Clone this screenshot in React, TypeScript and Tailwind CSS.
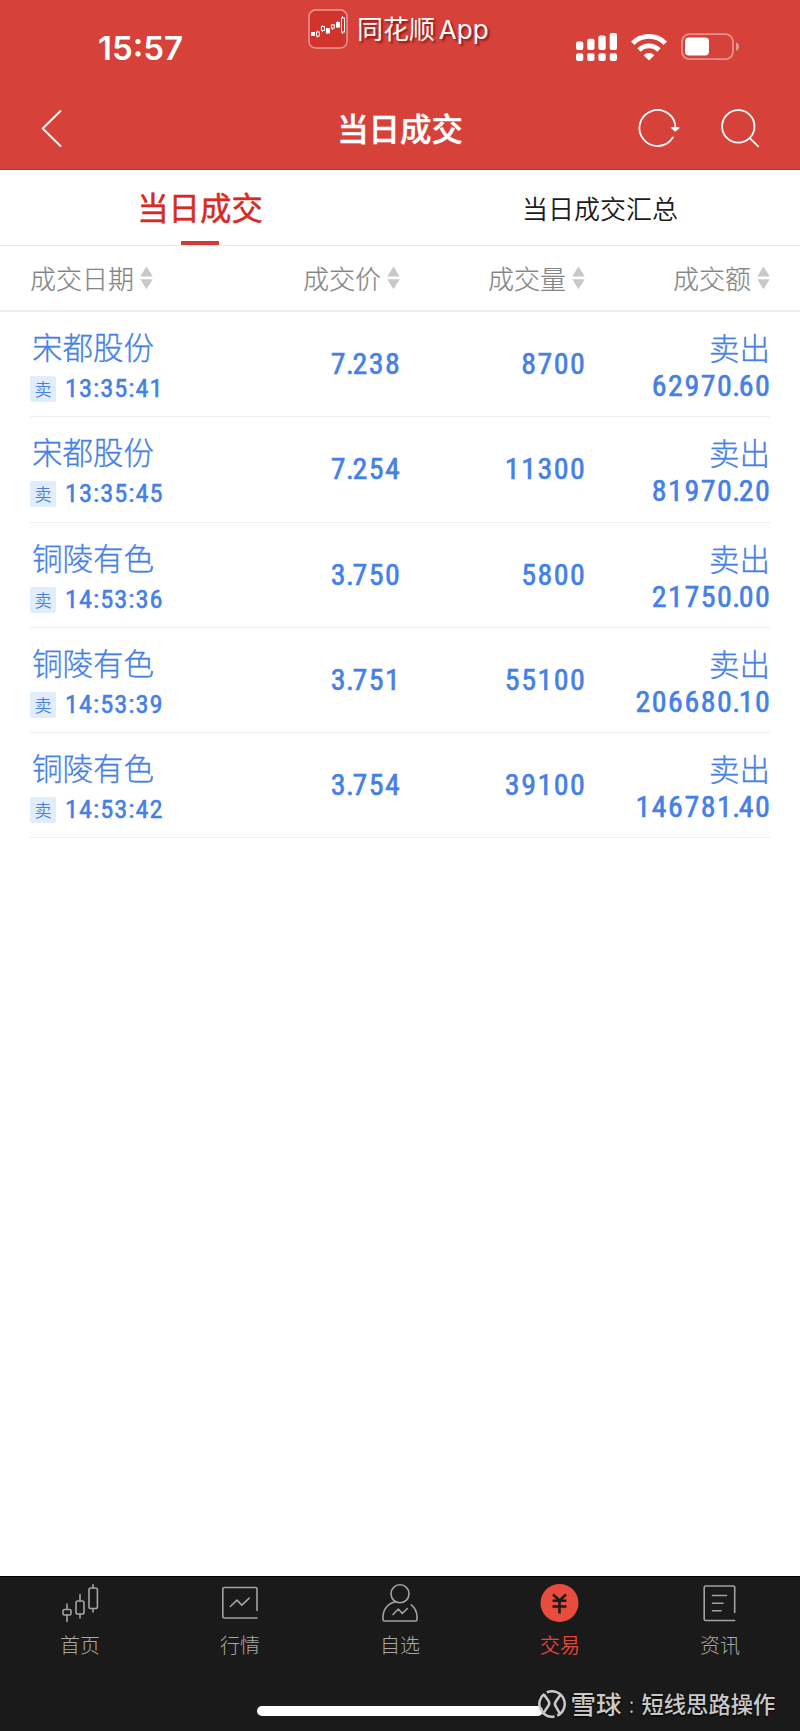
import React from 'react';

type Trade = { name: string; time: string; price: string; volume: string; amount: string };

const trades: Trade[] = [
  { name: '宋都股份', time: '13:35:41', price: '7.238', volume: '8700', amount: '62970.60' },
  { name: '宋都股份', time: '13:35:45', price: '7.254', volume: '11300', amount: '81970.20' },
  { name: '铜陵有色', time: '14:53:36', price: '3.750', volume: '5800', amount: '21750.00' },
  { name: '铜陵有色', time: '14:53:39', price: '3.751', volume: '55100', amount: '206680.10' },
  { name: '铜陵有色', time: '14:53:42', price: '3.754', volume: '39100', amount: '146781.40' },
];

const columns = ['成交日期', '成交价', '成交量', '成交额'];

function Figure({ value }: { value: string }) {
  const [whole, fraction] = value.split('.');
  return (
    <span className="-mr-[1.4px] font-['Roboto',sans-serif] text-[30px] font-normal leading-[36px] tracking-[1.5px] [-webkit-text-stroke:0.6px_#4580e6] [font-stretch:75%]">
      {whole}
      {fraction && <span className="-ml-[1px] tracking-[-1.5px]">.</span>}
      {fraction}
    </span>
  );
}

function SignalIcon() {
  return (
    <svg className="h-[30px] w-[42px]" viewBox="0 0 42 30" fill="#fff">
      <rect x="0" y="9.5" width="7.3" height="8.5" rx="2" />
      <rect x="11.2" y="6.8" width="7.3" height="11.2" rx="2" />
      <rect x="22.4" y="3.6" width="7.3" height="14.4" rx="2" />
      <rect x="33.7" y="1" width="7.3" height="17" rx="2" />
      <rect x="0" y="21.3" width="7.3" height="7.7" rx="2" />
      <rect x="11.2" y="21.3" width="7.3" height="7.7" rx="2" />
      <rect x="22.4" y="21.3" width="7.3" height="7.7" rx="2" />
      <rect x="33.7" y="21.3" width="7.3" height="7.7" rx="2" />
    </svg>
  );
}

function WifiIcon() {
  return (
    <svg className="h-[27px] w-[36px]" viewBox="0 0 36 27" fill="none" stroke="#fff" strokeWidth="4.8">
      <path d="M1.700 9.200a23 23 0 0 1 32.600 0" />
      <path d="M8 16a14.200 14.200 0 0 1 20 0" />
      <path d="M18 26.600l-5.400-5.400a7.600 7.600 0 0 1 10.800 0z" fill="#fff" stroke="none" />
    </svg>
  );
}

function BatteryIcon() {
  return (
    <svg className="h-[28px] w-[59px]" viewBox="0 0 59 28" fill="none">
      <rect x="1" y="1.2" width="51" height="25" rx="7.5" stroke="#fff" strokeOpacity=".42" strokeWidth="1.8" />
      <rect x="4" y="4.5" width="24" height="18" rx="4" fill="#fff" />
      <path d="M55 9.3c4 1.6 4 7.2 0 8.8z" fill="#fff" fillOpacity=".45" />
    </svg>
  );
}

function CandlesIcon() {
  return (
    <svg className="h-[40px] w-[40px]" viewBox="0 0 40 40" fill="none">
      <rect x="1" y="1" width="38" height="38" rx="6.5" fill="#d0342c" stroke="#fff" strokeOpacity=".5" strokeWidth="1.4" />
      <g stroke="#fff">
        <rect x="3.5" y="23.5" width="3" height="3" fill="#fff" />
        <path d="M9.5 21.5v7M14.5 16v7M19.5 19v6M24.5 15v6M29.5 12v7M34.5 7v18" strokeWidth=".8" />
        <rect x="8.5" y="23" width="2.8" height="4" fill="#cf3129" />
        <rect x="13.4" y="17.5" width="3" height="4" fill="#cf3129" />
        <rect x="18.5" y="19.5" width="3" height="4.5" fill="#fff" />
        <rect x="23.4" y="16" width="3" height="3" fill="#cf3129" />
        <rect x="28.5" y="13.5" width="3" height="4.5" fill="#fff" />
        <rect x="33.5" y="9" width="3" height="14" fill="#cf3129" />
      </g>
    </svg>
  );
}

function SortIcon() {
  return (
    <svg className="ml-[6px] h-[24px] w-[13px]" viewBox="0 0 13 24" fill="#c8c8c8">
      <path d="M6.5 .5l6.200 10H.3zM.3 13.300h12.400l-6.200 10z" />
    </svg>
  );
}

function BackIcon() {
  return (
    <svg className="h-[40px] w-[24px]" viewBox="0 0 24 40" fill="none" stroke="#fff" strokeWidth="1.9" strokeLinecap="round" strokeLinejoin="round">
      <path d="M20.5 2L2.7 19.5 20.5 37" />
    </svg>
  );
}

function RefreshIcon() {
  return (
    <svg className="h-[40px] w-[42px]" viewBox="0 0 42 40" fill="none" stroke="#fff" strokeWidth="1.8" strokeLinecap="round">
      <path d="M37.500 19A18 18 0 1 0 34.800 28.500" />
      <path d="M34 18.800h6.600l-3.300 2.800z" fill="#fff" strokeWidth="1.8" strokeLinejoin="round" />
    </svg>
  );
}

function SearchIcon() {
  return (
    <svg className="h-[40px] w-[40px]" viewBox="0 0 40 40" fill="none" stroke="#fff" strokeWidth="1.8" strokeLinecap="round">
      <circle cx="18.3" cy="17.4" r="16.2" />
      <path d="M29.8 29.200l8.400 8.200" />
    </svg>
  );
}

const navStroke = { fill: 'none', stroke: '#a3a3a3', strokeWidth: 1.6, strokeLinecap: 'round', strokeLinejoin: 'round' } as const;

function HomeIcon() {
  return (
    <svg className="h-[40px] w-[40px]" viewBox="0 0 40 40" {...navStroke}>
      <rect x="3" y="25.5" width="8" height="5.5" rx="1.5" />
      <path d="M7 20v5.500M7 31v6.500M20 10.500V17M20 30v4M33 .8v3.200M33 24.500v3.500" />
      <rect x="16" y="17" width="8" height="13" rx="1.8" />
      <rect x="29" y="4" width="8.4" height="20.5" rx="1.8" />
    </svg>
  );
}

function MarketIcon() {
  return (
    <svg className="h-[40px] w-[40px]" viewBox="0 0 40 40" {...navStroke}>
      <path d="M37 26.500V5a1.500 1.500 0 0 0-1.500-1.500H4.300A1.500 1.500 0 0 0 2.800 5v27.500A1.500 1.500 0 0 0 4.300 34H37" />
      <path d="M10.300 22.500l6.700-6.400 4.800 5 7.400-7" />
    </svg>
  );
}

function WatchlistIcon() {
  return (
    <svg className="h-[40px] w-[40px]" viewBox="0 0 40 40" {...navStroke}>
      <circle cx="20" cy="9.8" r="9" />
      <path d="M15.500 17.800C7.800 19.500 3 25.500 3 33v2.500A1.500 1.500 0 0 0 4.500 37h31a1.500 1.500 0 0 0 1.500-1.500V33c0-5-2-9.300-5.800-12.200" />
      <path d="M13 30.500l5.300-5.500 4 4.500 5-5" />
    </svg>
  );
}

function TradeIcon() {
  return (
    <svg className="h-[40px] w-[40px]" viewBox="0 0 40 40" fill="none">
      <circle cx="19.5" cy="19" r="19" fill="#e84c3c" />
      <path d="M13 10.500l6.500 6 6.500-6M12.500 16.800h14M12.500 22.500h14M19.500 16.800V29.500" stroke="#1a1a1a" strokeWidth="2.5" />
    </svg>
  );
}

function NewsIcon() {
  return (
    <svg className="h-[40px] w-[40px]" viewBox="0 0 40 40" {...navStroke}>
      <path d="M34.700 28.500V3.500A1.500 1.500 0 0 0 33.200 2H5.700a1.500 1.500 0 0 0-1.500 1.500V35a1.500 1.500 0 0 0 1.500 1.500h29" />
      <path d="M12.500 11.500h14M12.500 19.200h10.500M12.500 26.800h8.500" />
    </svg>
  );
}

function SnowballIcon() {
  return (
    <svg className="h-[30px] w-[30px]" viewBox="0 0 30 30" fill="none" stroke="#c9c9c9" strokeWidth="2.5">
      <path d="M9.800 3.400A12.700 12.700 0 0 1 20.200 26.600M17.500 27.450A12.700 12.700 0 0 1 7.200 5" />
      <path d="M6.800 5.200l4.600 6.600q1.800 2.700 0 5L6.500 24M23.300 6l-4.500 6.500q-1.800 2.700 0 5l4.200 7.300" />
    </svg>
  );
}

const navItems = [
  { label: '首页', Icon: HomeIcon },
  { label: '行情', Icon: MarketIcon },
  { label: '自选', Icon: WatchlistIcon },
  { label: '交易', Icon: TradeIcon, active: true },
  { label: '资讯', Icon: NewsIcon },
];

export default function App() {
  return (
    <div className="relative flex h-[1731px] w-[800px] flex-col overflow-hidden bg-white font-['Noto_Sans_CJK_SC',sans-serif]">
      <header className="flex h-[170px] flex-col border-b border-[#cc3029] bg-[#d64139] text-white">
        <div className="flex h-[88px] items-start">
          <div className="ml-[98px] mt-[24px] w-[210px] font-['Inter',sans-serif] text-[33px] font-semibold leading-[48px]">15:57</div>
          <div className="mt-[9px] flex h-[40px] w-[268px] items-center">
            <CandlesIcon />
            <span className="ml-[9px] whitespace-nowrap text-[26px] leading-[40px] [text-shadow:2px_2px_2px_rgba(90,0,0,0.6)]">
              同花顺 <span className="-ml-[2px] font-['Inter',sans-serif]">App</span>
            </span>
          </div>
          <div className="mt-[32px] flex h-[30px] items-center">
            <SignalIcon />
            <span className="ml-[13px] flex"><WifiIcon /></span>
            <span className="ml-[14px] flex"><BatteryIcon /></span>
          </div>
        </div>
        <div className="grid h-[81px] grid-cols-[1fr_auto_1fr] items-center pl-[40px] pr-[40px]">
          <BackIcon />
          <h1 className="-mt-[2px] text-center text-[31.4px] font-medium leading-[40px] [-webkit-text-stroke:0.4px_#fff]">当日成交</h1>
          <div className="flex items-center justify-end gap-[40px]">
            <RefreshIcon />
            <SearchIcon />
          </div>
        </div>
      </header>

      <nav className="grid h-[76px] grid-cols-2 border-b border-[#e6e6e6]">
        <div className="flex flex-col items-center">
          <span className="h-[71px] text-[31.4px] font-normal leading-[73px] text-[#d52b24] [-webkit-text-stroke:0.5px_#d52b24]">当日成交</span>
          <span className="h-[4px] w-[38px] bg-[#d43a33]" />
        </div>
        <div className="text-center text-[26px] font-[350] leading-[75px] text-[#1c1c1c]">当日成交汇总</div>
      </nav>

      <div className="grid h-[66px] grid-cols-4 items-center border-b-2 border-[#eee] px-[30px]">
        {columns.map((label, i) => (
          <div key={label} className={i === 0 ? 'flex items-center' : 'flex items-center justify-end'}>
            <span className="text-[26px] font-light leading-[40px] text-[#858585] [-webkit-text-stroke:0.2px_#858585]">{label}</span>
            <SortIcon />
          </div>
        ))}
      </div>

      <main className="flex flex-1 flex-col px-[30px] text-[#4580e6]">
        {trades.map((t) => (
          <div key={t.time} className="grid h-[105.25px] grid-cols-4 items-center border-b border-[#efefef]">
            <div className="flex h-full flex-col pt-[15px]">
              <span className="pl-[2px] text-[30.5px] font-light leading-[38px] [-webkit-text-stroke:0.3px_#4580e6]">{t.name}</span>
              <div className="mt-[11px] flex h-[26px] items-center">
                <span className="h-[26px] w-[26px] rounded-[2px] bg-[#e2edfb] text-center text-[17px] font-[350] leading-[25px]">卖</span>
                <span className="-mt-[2px] ml-[9px] font-['Roboto',sans-serif] text-[26.5px] font-normal leading-[26px] tracking-[0.95px] [-webkit-text-stroke:0.5px_#4580e6] [font-stretch:75%]">{t.time}</span>
              </div>
            </div>
            <div className="flex justify-end"><Figure value={t.price} /></div>
            <div className="flex justify-end"><Figure value={t.volume} /></div>
            <div className="flex h-full flex-col items-end pt-[16px]">
              <span className="text-[30.5px] font-light leading-[38px] [-webkit-text-stroke:0.3px_#4580e6]">卖出</span>
              <span className="mt-[2px] flex"><Figure value={t.amount} /></span>
            </div>
          </div>
        ))}
      </main>

      <footer className="flex h-[155px] flex-col items-center border-t border-black bg-[#1a1a1a]">
        <div className="grid w-full grid-cols-5">
          {navItems.map(({ label, Icon, active }) => (
            <div key={label} className="flex flex-col items-center pt-[7px]">
              <Icon />
              <span className={active ? 'mt-[6px] text-[20px] font-[350] leading-[30px] text-[#e8443a]' : 'mt-[6px] text-[20px] font-light leading-[30px] text-[#a8a8a8]'}>{label}</span>
            </div>
          ))}
        </div>
        <div className="mt-[46px] h-[10px] w-[286px] rounded-full bg-white" />
      </footer>

      <div className="absolute bottom-[10px] left-[536.5px] flex h-[34px] items-center whitespace-nowrap text-[#c9c9c9] [text-shadow:0_1px_2px_#000]">
        <SnowballIcon />
        <span className="-mt-[2px] ml-[4px] text-[25.5px] font-medium leading-[34px]">雪球</span>
        <span className="-mt-[2px] w-[20px] text-center text-[22px] font-light leading-[34px]">:</span>
        <span className="-mt-[2px] text-[22.3px] font-medium leading-[34px]">短线思路操作</span>
      </div>
    </div>
  );
}
